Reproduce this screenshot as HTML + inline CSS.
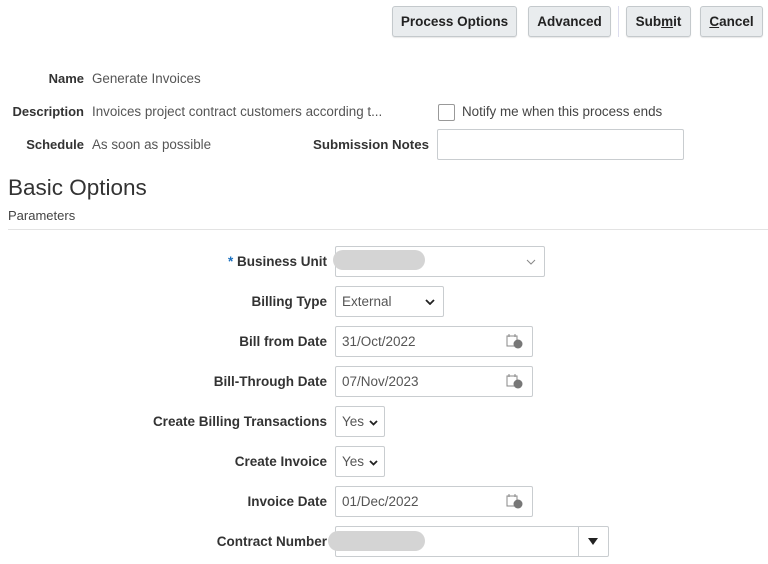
<!DOCTYPE html>
<html><head><style>
*{box-sizing:border-box}
body{margin:0;width:768px;height:564px;background:#fff;font-family:"Liberation Sans",Arial,sans-serif;color:#333;position:relative;overflow:hidden}
.a{position:absolute}
.btn{position:absolute;top:6px;height:31px;border:1px solid #c4c9cc;border-radius:3px;background:#e9ecee;font-weight:bold;font-size:13.5px;color:#222;text-align:center;line-height:29px;box-shadow:0 1px 1px rgba(0,0,0,.1)}
.lb{position:absolute;right:684px;font-weight:bold;font-size:13px;color:#333;text-align:right;white-space:nowrap}
.tv{position:absolute;left:92px;font-size:13.4px;color:#555;white-space:nowrap}
.pl{position:absolute;right:441px;font-weight:bold;font-size:13.5px;color:#333;white-space:nowrap}
.in{position:absolute;left:335px;height:31px;border:1px solid #c9cdd0;border-radius:2px;background:#fff;font-size:13.5px;color:#555;padding-left:6px;line-height:29px}
.blur{position:absolute;background:#d4d4d4;border-radius:10px;height:20px}
.cal{position:absolute;right:8px;top:6px}
</style></head><body>
<div class="btn" style="left:392px;width:125px">Process Options</div>
<div class="btn" style="left:528px;width:83px">Advanced</div>
<div class="a" style="left:618px;top:6px;width:1px;height:31px;background:#dde"></div>
<div class="btn" style="left:626px;width:65px">Sub<u>m</u>it</div>
<div class="btn" style="left:700px;width:63px"><u>C</u>ancel</div>

<div class="lb" style="top:71px">Name</div><div class="tv" style="top:71px">Generate Invoices</div>
<div class="lb" style="top:104px">Description</div><div class="tv" style="top:104px">Invoices project contract customers according t...</div>
<div class="lb" style="top:137px">Schedule</div><div class="tv" style="top:137px">As soon as possible</div>
<div class="a" style="left:438px;top:104px;width:17px;height:17px;border:1px solid #999;border-radius:2px"></div>
<div class="a" style="left:462px;top:104px;font-size:13.4px;color:#444">Notify me when this process ends</div>
<div class="a" style="left:313px;top:137px;font-weight:bold;font-size:13.3px">Submission Notes</div>
<div class="a" style="left:437px;top:129px;width:247px;height:31px;border:1px solid #c9cdd0;border-radius:2px"></div>

<div class="a" style="left:8px;top:175px;font-size:22.5px;color:#333">Basic Options</div>
<div class="a" style="left:8px;top:208px;font-size:13px;color:#444">Parameters</div>
<div class="a" style="left:8px;top:229px;width:760px;height:1px;background:#e3e3e3"></div>

<div class="pl" style="top:254px"><span style="color:#1a70c0">*</span> Business Unit</div>
<div class="in" style="top:246px;width:210px"><svg class="a" style="right:8px;top:12px" width="10" height="6"><path d="M1 1l4 4 4-4" stroke="#888" fill="none"/></svg></div>
<div class="blur" style="left:333px;top:250px;width:92px"></div>

<div class="pl" style="top:294px">Billing Type</div>
<div class="in" style="top:286px;width:109px">External<svg class="a" style="right:8px;top:12px" width="10" height="6"><path d="M1 1l4 4 4-4" stroke="#222" stroke-width="1.8" fill="none"/></svg></div>

<div class="pl" style="top:334px">Bill from Date</div>
<div class="in" style="top:326px;width:198px">31/Oct/2022<svg class="cal" width="18" height="16"><rect x="1" y="3" width="10" height="10" fill="none" stroke="#888"/><path d="M3 1v3M9 1v3" stroke="#888"/><circle cx="12" cy="11" r="4.5" fill="#777"/></svg></div>

<div class="pl" style="top:374px">Bill-Through Date</div>
<div class="in" style="top:366px;width:198px">07/Nov/2023<svg class="cal" width="18" height="16"><rect x="1" y="3" width="10" height="10" fill="none" stroke="#888"/><path d="M3 1v3M9 1v3" stroke="#888"/><circle cx="12" cy="11" r="4.5" fill="#777"/></svg></div>

<div class="pl" style="top:414px">Create Billing Transactions</div>
<div class="in" style="top:406px;width:50px">Yes<svg class="a" style="right:6px;top:13px" width="9" height="6"><path d="M1 1l3.5 3.5L8 1" stroke="#222" stroke-width="1.8" fill="none"/></svg></div>

<div class="pl" style="top:454px">Create Invoice</div>
<div class="in" style="top:446px;width:50px">Yes<svg class="a" style="right:6px;top:13px" width="9" height="6"><path d="M1 1l3.5 3.5L8 1" stroke="#222" stroke-width="1.8" fill="none"/></svg></div>

<div class="pl" style="top:494px">Invoice Date</div>
<div class="in" style="top:486px;width:198px">01/Dec/2022<svg class="cal" width="18" height="16"><rect x="1" y="3" width="10" height="10" fill="none" stroke="#888"/><path d="M3 1v3M9 1v3" stroke="#888"/><circle cx="12" cy="11" r="4.5" fill="#777"/></svg></div>

<div class="pl" style="top:534px">Contract Number</div>
<div class="in" style="top:526px;width:274px"><div class="a" style="left:242px;top:0;width:1px;height:29px;background:#c9cdd0"></div><svg class="a" style="right:10px;top:11px" width="10" height="7"><path d="M0 0h10L5 7z" fill="#222"/></svg></div>
<div class="blur" style="left:328px;top:531px;width:97px"></div>
</body></html>
